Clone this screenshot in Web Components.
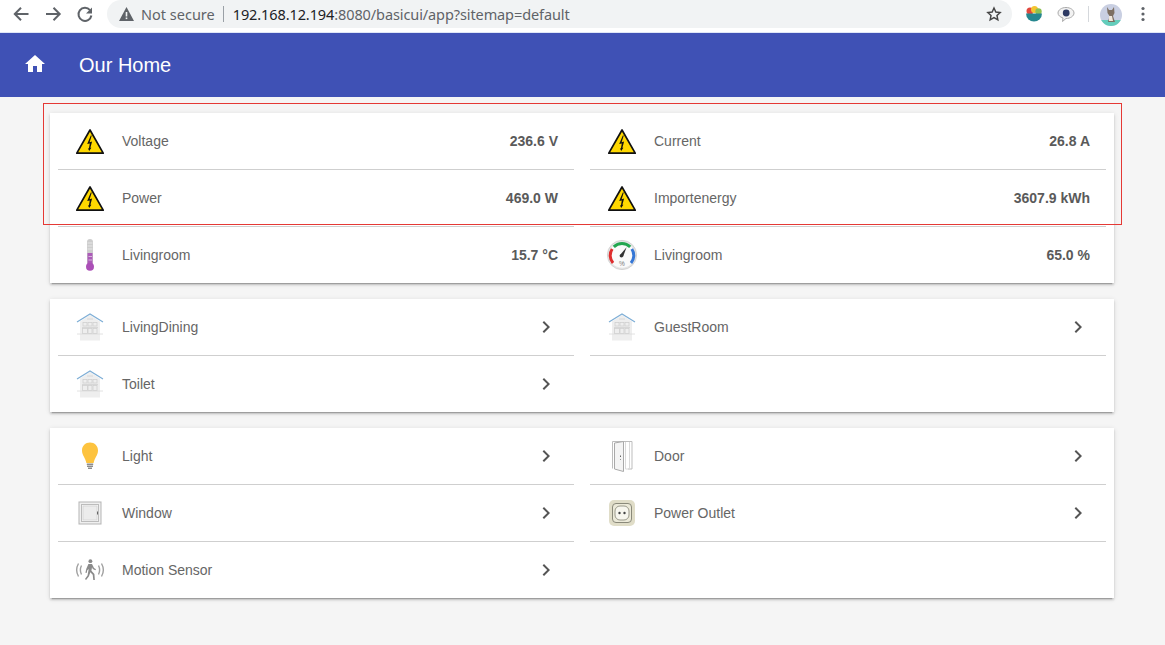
<!DOCTYPE html>
<html><head><meta charset="utf-8">
<style>
html,body{margin:0;padding:0;background:#f5f5f5;font-family:"Liberation Sans",Arial,sans-serif;height:645px;overflow:hidden}
</style></head><body>
<browser-bar></browser-bar>
<app-header>Our Home</app-header>
<app-page>
  <app-card>
    <app-row icon="warn" label="Voltage" value="236.6 V"></app-row>
    <app-row icon="warn" label="Current" value="26.8 A"></app-row>
    <app-row icon="warn" label="Power" value="469.0 W"></app-row>
    <app-row icon="warn" label="Importenergy" value="3607.9 kWh"></app-row>
    <app-row icon="thermo" label="Livingroom" value="15.7 °C" last></app-row>
    <app-row icon="gauge" label="Livingroom" value="65.0 %" last></app-row>
  </app-card>
  <app-card>
    <app-row icon="house" label="LivingDining" link></app-row>
    <app-row icon="house" label="GuestRoom" link></app-row>
    <app-row icon="house" label="Toilet" link last></app-row>
  </app-card>
  <app-card>
    <app-row icon="bulb" label="Light" link></app-row>
    <app-row icon="door" label="Door" link></app-row>
    <app-row icon="window" label="Window" link></app-row>
    <app-row icon="outlet" label="Power Outlet" link></app-row>
    <app-row icon="motion" label="Motion Sensor" link last></app-row>
  </app-card>
  <red-mark></red-mark>
</app-page>
<script>
const ICONS={
warn:`<path d="M16 5 2.800 28.200H29.200z" fill="#ffd800" stroke="#111" stroke-width="1.700" stroke-linejoin="round"/><path d="M16.800 10.500 13.200 19l2.600-.6-.9 5-1-.1 1.300 2.700 2.200-3.300-1 .1 1.700-6.200-2.500.6 2.200-6.700z" fill="#111"/>`,
thermo:`<rect x="13" y="0" width="6" height="26" rx="3" fill="#cdcdcd"/><path d="M13.500 4h5M13.500 7h5M13.500 10h5" stroke="#e6e6e6" stroke-width="1"/><rect x="13.500" y="14" width="5" height="13" fill="#ab5bb8"/><circle cx="16" cy="27.800" r="4" fill="#ab4fb7"/><path d="M14.500 17.500h3.500M14.500 21h3.500" stroke="#d7b4dc" stroke-width="1"/>`,
gauge:`<circle cx="16" cy="16" r="14.600" fill="#e4e4e4" stroke="#d4d4d4"/><circle cx="16" cy="16" r="12.800" fill="#fafafa"/><path d="M7 24A11.500 11.500 0 0 1 6.200 10" fill="none" stroke="#de2c2c" stroke-width="3"/><path d="M7.800 7.900A11.500 11.500 0 0 1 24.200 7.900" fill="none" stroke="#23a650" stroke-width="3"/><path d="M25.800 10A11.500 11.500 0 0 1 25 24" fill="none" stroke="#3577d6" stroke-width="3"/><path d="M20.600 8.200 14.400 15.400l2.800 2z" fill="#333"/><circle cx="15.400" cy="16.800" r="1.800" fill="#333"/><text x="16" y="26.500" font-size="6.500" text-anchor="middle" fill="#777" font-family="Liberation Sans">%</text>`,
house:`<path d="M6 10.500 16 4 26 10.500V29.500H6z" fill="#eeeeee"/><path d="M3 11 16 3 29 11" fill="none" stroke="#7eaed6" stroke-width="1.200"/><path d="M3 23h26" stroke="#dadada" stroke-width=".8"/><g fill="none" stroke="#d0d0d0" stroke-width=".8"><rect x="9" y="11.500" width="4" height="3.500"/><rect x="14" y="11.500" width="4" height="3.500"/><rect x="19" y="11.500" width="4" height="3.500"/><rect x="8.500" y="17.500" width="5" height="5"/><rect x="14" y="17.500" width="4" height="5"/><rect x="19" y="17.500" width="4" height="5"/><path d="M13 8h6"/><path d="M8 16.500h16"/></g>`,
bulb:`<path d="M16 2.500c-4.600 0-8 3.400-8 8 0 4.700 3.400 7.400 4.400 12.500h7.200c1-5.100 4.400-7.800 4.400-12.500 0-4.600-3.400-8-8-8z" fill="#fdc33f"/><path d="M12.800 24.200h6.400M13 26.200h6M14 28.200h4" stroke="#8d8d8d" stroke-width="1.400"/>`,
door:`<path d="M6.500 28.500V1.500h19.500v27.500h-4" fill="none" stroke="#bdbdbd" stroke-width="1"/><path d="M8.500 3 17.500 1.500V31.500L8.500 29z" fill="#f4f4f4" stroke="#a9a9a9"/><path d="M19.500 2v27h4V2" fill="none" stroke="#dadada"/><rect x="14" y="15.500" width="1" height="1.500" fill="#666"/><rect x="14" y="19" width="1" height="1" fill="#999"/>`,
window:`<rect x="5" y="5" width="22" height="22" fill="#f0f0f0" stroke="#b5b5b5" stroke-width="1"/><rect x="7.500" y="7.500" width="17" height="17" fill="#f6f6f6" stroke="#bcbcbc" stroke-width="1"/><rect x="9" y="9" width="14" height="14" fill="#ececec" stroke="#d0d0d0" stroke-width=".7"/><rect x="23" y="14.500" width="1" height="3" fill="#666"/>`,
outlet:`<rect x="3" y="3" width="26" height="26" rx="5" fill="#e0ddc8"/><rect x="6.500" y="6.500" width="19" height="19" rx="3.500" fill="#ebe9d8" stroke="#8a897a" stroke-width="1"/><rect x="9" y="9" width="14" height="14" rx="5" fill="#f7f6ee" stroke="#9a998b" stroke-width="1"/><circle cx="13.500" cy="16" r="1.200" fill="#444"/><circle cx="18.500" cy="16" r="1.200" fill="#444"/>`,
motion:`<g transform="translate(3.200 3.200) scale(.8)"><circle cx="16.500" cy="5" r="2.400" fill="#8a8a8a"/><path d="M14 8.500h4.500l2.500 5 2.500 1.500-.8 1.200-3.200-1.600-1-2-.7 4.300 3.700 4.100.6 7.500h-2l-.7-6.700-3-3-1.700 5-3.600 4.700-1.400-1.200 3.200-4.400 1.500-8-1.800 1.300-.8 3.500-1.500-.3 1-4.500z" fill="#8a8a8a"/></g><g fill="none" stroke="#a0a0a0" stroke-width="1.400"><path d="M7.500 11.500c-1.500 3-1.500 6 0 9M4.500 9.500c-2.400 4.200-2.400 8.800 0 13M24.500 11.500c1.500 3 1.500 6 0 9M27.500 9.500c2.400 4.200 2.400 8.800 0 13"/></g>`
};
function def(name,css,html){
  customElements.define(name,class extends HTMLElement{
    connectedCallback(){
      if(this.shadowRoot)return;
      const r=this.attachShadow({mode:'open'});
      r.innerHTML=`<style>${css}</style>`+(typeof html==='function'?html(this):html);
    }
  });
}
def('browser-bar',`
:host{display:flex;align-items:flex-start;height:33px;box-sizing:border-box;background:#fff;border-bottom:1px solid #dfe6f7;font-family:"Noto Sans","Open Sans",sans-serif;color:#5f6368}
.nav{display:flex;width:107px;height:28px;align-items:center;padding-left:5px;box-sizing:border-box;gap:0}
.nav svg{width:32px;height:20px;flex:none}
.omni{flex:none;width:905px;height:28px;border-radius:14px;background:#f1f3f4;display:flex;align-items:center;box-sizing:border-box;padding-left:11px;font-size:14.5px;white-space:nowrap}
.omni .warn{width:17px;height:16px;margin-right:6px;flex:none}
.sep{width:1px;height:16px;background:#9aa0a6;margin:0 9px 0 8px;flex:none}
.url b{font-weight:400;color:#202124}
.url{flex:1;letter-spacing:-.1px}
.star{width:16px;height:16px;margin-right:10px;flex:none}
.ext{display:flex;align-items:center;height:28px;flex:1}
.ext svg{flex:none}
`,`<div class="nav">
<svg viewBox="0 0 32 20"><path d="M23.500 10H10M16 3.800 9.800 10l6.200 6.200" fill="none" stroke="#5f6368" stroke-width="2"/></svg>
<svg viewBox="0 0 32 20"><path d="M9 10h13.500M16.500 3.800l6.200 6.200-6.200 6.200" fill="none" stroke="#5f6368" stroke-width="2"/></svg>
<svg viewBox="0 0 32 20"><path d="M21 6.200A6.500 6.500 0 1 0 22.400 11.500" fill="none" stroke="#5f6368" stroke-width="2"/><path d="M23 3.500V9.500H17z" fill="#5f6368"/></svg>
</div>
<div class="omni">
<svg class="warn" viewBox="0 0 17 16"><path d="M8.500 1 16 15H1z" fill="#5f6368"/><rect x="7.700" y="6" width="1.600" height="4.500" fill="#f1f3f4"/><rect x="7.700" y="11.500" width="1.600" height="1.600" fill="#f1f3f4"/></svg>
<span>Not secure</span><span class="sep"></span>
<span class="url"><b>192.168.12.194</b>:8080/basicui/app?sitemap=default</span>
<svg class="star" viewBox="0 0 20 20"><path d="m10 2.500 2.300 5 5.400.6-4 3.700 1.100 5.400-4.800-2.700-4.800 2.700 1.100-5.400-4-3.700 5.400-.6z" fill="none" stroke="#444" stroke-width="1.800"/></svg>
</div>
<div class="ext">
<svg style="margin-left:13px" width="18" height="18" viewBox="0 0 18 18"><circle cx="5" cy="6" r="3.500" fill="#e0483e"/><circle cx="9.500" cy="4.500" r="3.500" fill="#f4c430"/><circle cx="13.500" cy="6.500" r="3.200" fill="#8cc152"/><path d="M1 8.500a8 8 0 0 0 16 0z" fill="#26878f"/></svg>
<svg style="margin-left:14px" width="18" height="18" viewBox="0 0 18 18"><path d="M9 2.500c4.500 0 8 2.500 8 5.500s-3.500 5.500-8 5.500l-3.500 3 .5-3.500C3 12 1 10.300 1 8c0-3 3.500-5.500 8-5.500z" fill="#f2f2f2" stroke="#aaa"/><circle cx="9.200" cy="8" r="3.400" fill="#2e3a63"/></svg>
<span style="width:1px;height:16px;background:#d5d8dc;margin-left:13px"></span>
<svg style="margin-left:11px;margin-top:1px" width="22" height="22" viewBox="0 0 22 22"><defs><clipPath id="av"><circle cx="11" cy="11" r="11"/></clipPath></defs><g clip-path="url(#av)"><rect width="22" height="22" fill="#c9cfe2"/><rect y="16" width="22" height="6" fill="#63cdbb"/><path d="M7 3l2 3h3l2-3 .5 6-1.500 3 2 6H8l1.500-6L7.500 9z" fill="#7d6f62"/><path d="M9 12h3l1 5H9z" fill="#efe6da"/></g></svg>
<svg style="margin-left:18px" width="6" height="16" viewBox="0 0 6 16"><circle cx="3" cy="2.500" r="1.600" fill="#5f6368"/><circle cx="3" cy="8" r="1.600" fill="#5f6368"/><circle cx="3" cy="13.500" r="1.600" fill="#5f6368"/></svg>
</div>`);
def('app-header',`
:host{display:flex;align-items:center;height:64px;background:#3f51b5;color:#fff;font-size:20px;box-sizing:border-box;padding-left:23px}
svg{width:24px;height:24px;margin-right:32px;margin-top:-3px;flex:none}
`,`<svg viewBox="0 0 24 24"><path d="M10 20v-6h4v6h5v-8h3L12 3 2 12h3v8z" fill="#fff"/></svg><slot></slot>`);
def('app-page',`
:host{display:flex;flex-direction:column;gap:16px;padding:16px 51px 0 50px;position:relative}
`,`<slot></slot>`);
def('app-card',`
:host{display:grid;grid-template-columns:516px 516px;column-gap:16px;padding:0 8px;background:#fff;box-shadow:0 2px 2px 0 rgba(0,0,0,.14),0 3px 1px -2px rgba(0,0,0,.2),0 1px 5px 0 rgba(0,0,0,.12)}
`,`<slot></slot>`);
def('app-row',`
:host{display:flex;align-items:center;height:57px;box-sizing:border-box;border-bottom:1px solid #cfcfcf;padding:0 16px;color:#666;font-size:14px}
:host([last]){height:56px;border-bottom:0}
svg.i{width:32px;height:32px;margin-right:16px;flex:none}
.l{flex:1;white-space:nowrap}
.v{font-weight:700;color:#5a5a5a;white-space:nowrap}
svg.c{width:24px;height:24px;flex:none}
`,el=>{
  const ic=ICONS[el.getAttribute('icon')]||'';
  const lab=el.getAttribute('label')||'',val=el.getAttribute('value');
  return `<svg class="i" viewBox="0 0 32 32">${ic}</svg><span class="l">${lab}</span>`+
   (val!==null?`<span class="v">${val}</span>`:'')+
   (el.hasAttribute('link')?`<svg class="c" viewBox="0 0 24 24"><path d="M8.600 16.600 13.200 12 8.600 7.400 10 6l6 6-6 6z" fill="#555"/></svg>`:'');
});
def('red-mark',`
:host{position:absolute;left:43px;top:6px;width:1079px;height:122px;box-sizing:border-box;border:1px solid #e53935;pointer-events:none}
`,``);
</script>
</body></html>
